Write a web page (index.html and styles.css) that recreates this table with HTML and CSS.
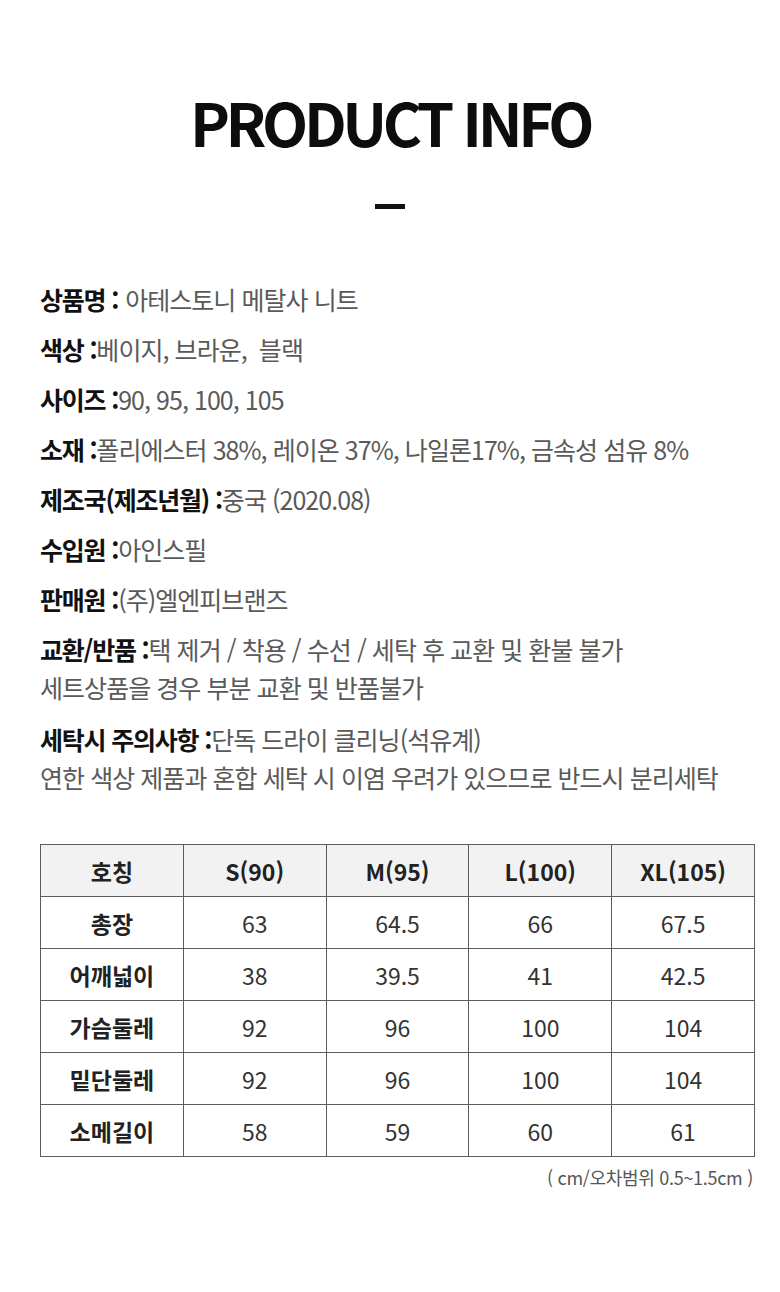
FILE: index.html
```html
<!DOCTYPE html>
<html lang="ko">
<head>
<meta charset="utf-8">
<title>PRODUCT INFO</title>
<link rel="stylesheet" href="styles.css">
</head>
<body>
<main class="page">
  <header class="head">
    <h1 class="title">PRODUCT INFO</h1>
    <div class="dash"></div>
  </header>

  <section class="info">
    <p class="row"><b class="k">상품명 :</b> <span class="v">아테스토니 메탈사 니트</span></p>
    <p class="row"><b class="k">색상 :</b><span class="v">베이지, 브라운,&nbsp; 블랙</span></p>
    <p class="row"><b class="k">사이즈 :</b><span class="v">90, 95, 100, 105</span></p>
    <p class="row"><b class="k">소재 :</b><span class="v">폴리에스터 38%, 레이온 37%, 나일론17%, 금속성 섬유 8%</span></p>
    <p class="row"><b class="k">제조국(제조년월) :</b><span class="v">중국 (2020.08)</span></p>
    <p class="row"><b class="k">수입원 :</b><span class="v">아인스필</span></p>
    <p class="row"><b class="k">판매원 :</b><span class="v">(주)엘엔피브랜즈</span></p>
    <p class="row"><b class="k">교환/반품 :</b><span class="v">택 제거 / 착용 / 수선 / 세탁 후 교환 및 환불 불가</span><br><span class="v">세트상품을 경우 부분 교환 및 반품불가</span></p>
    <p class="row row-last"><b class="k">세탁시 주의사항 :</b><span class="v">단독 드라이 클리닝(석유계)</span><br><span class="v">연한 색상 제품과 혼합 세탁 시 이염 우려가 있으므로 반드시 분리세탁</span></p>
  </section>

  <table class="size">
    <thead>
      <tr><th>호칭</th><th>S(90)</th><th>M(95)</th><th>L(100)</th><th>XL(105)</th></tr>
    </thead>
    <tbody>
      <tr><th>총장</th><td>63</td><td>64.5</td><td>66</td><td>67.5</td></tr>
      <tr><th>어깨넓이</th><td>38</td><td>39.5</td><td>41</td><td>42.5</td></tr>
      <tr><th>가슴둘레</th><td>92</td><td>96</td><td>100</td><td>104</td></tr>
      <tr><th>밑단둘레</th><td>92</td><td>96</td><td>100</td><td>104</td></tr>
      <tr><th>소메길이</th><td>58</td><td>59</td><td>60</td><td>61</td></tr>
    </tbody>
  </table>
  <p class="note">( cm/오차범위 0.5~1.5cm )</p>
</main>
</body>
</html>
```

FILE: styles.css
```css
html, body {
  margin: 0;
  padding: 0;
  background: #ffffff;
}

body {
  font-family: "Noto Sans CJK KR", "Noto Sans", sans-serif;
  color: #111;
}

.page {
  width: 780px;
  box-sizing: border-box;
  padding: 90px 25px 80px 40px;
}

.head {
  display: flex;
  flex-direction: column;
  align-items: center;
  padding-right: 15px;
}

.title {
  margin: 0;
  font-size: 60px;
  line-height: 62px;
  font-weight: 700;
  letter-spacing: -4.4px;
  color: #0d0d0d;
}

.dash {
  width: 30px;
  height: 5px;
  background: #111;
  margin-top: 52px;
}

.info {
  margin-top: 71px;
  display: flex;
  flex-direction: column;
  gap: 12px;
}

.row {
  margin: 0;
  font-size: 25px;
  line-height: 38px;
  white-space: nowrap;
}

.row-last {
  margin-top: 2px;
}

.k {
  font-weight: 700;
  color: #111;
  letter-spacing: -1.2px;
}

.v {
  font-weight: 400;
  color: #5a5a5a;
  letter-spacing: -0.95px;
}

.size {
  margin-top: 48px;
  width: 715px;
  border-collapse: collapse;
  table-layout: fixed;
  font-size: 23px;
}

.size th,
.size td {
  border: 1px solid #5c5c5c;
  height: 51px;
  padding: 0;
  text-align: center;
  vertical-align: middle;
  line-height: 30px;
}

.size thead th {
  background: #f2f2f2;
  font-weight: 700;
  color: #222;
}

.size tbody th {
  font-weight: 700;
  color: #222;
}

.size td {
  font-weight: 400;
  color: #333;
}

.note {
  margin: 8px 2px 0 0;
  text-align: right;
  font-size: 18px;
  line-height: 24px;
  color: #555;
  letter-spacing: -0.3px;
}
```
